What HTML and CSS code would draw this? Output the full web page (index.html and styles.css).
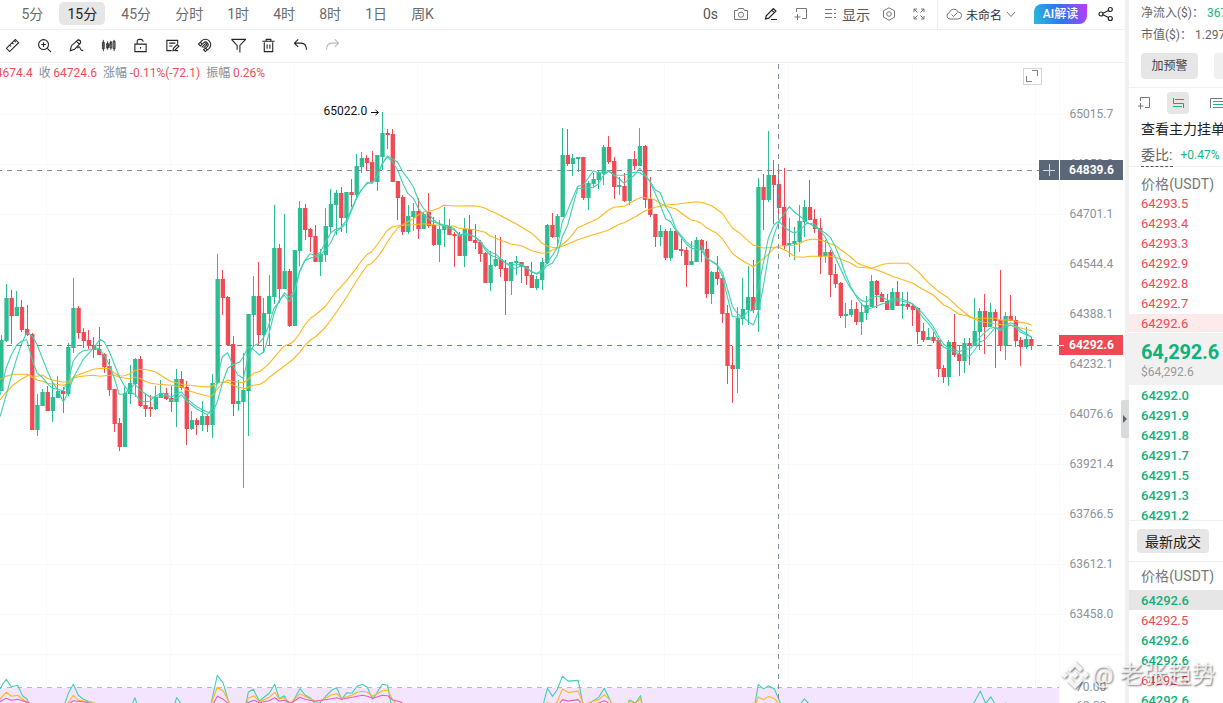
FILE: index.html
```html
<!DOCTYPE html>
<html lang="zh-CN">
<head>
<meta charset="utf-8">
<title>K线行情</title>
<link rel="stylesheet" href="styles.css">
</head>
<body>
<div class="app">
  <main class="main">
    <header class="topbar">
      <nav class="periods">
        <span>5分</span><span class="on">15分</span><span>45分</span><span>分时</span><span>1时</span><span>4时</span><span>8时</span><span>1日</span><span>周K</span>
      </nav>
      <div class="tools">
        <span class="secs">0s</span>
        <svg class="camera" width="16" height="14" viewBox="0 0 16 14"><path d="M1.500 3.500h3l1-2h5l1 2h3v9h-13z"/><circle cx="8" cy="7.700" r="2.600"/></svg>
        <svg class="pencil dark" width="14" height="14" viewBox="0 0 14 14"><path d="M1.500 12l.8-3.200 7-7.200 2.600 2.500-7.200 7.100zM7.800 3.200l2.500 2.500M7 12.500h6"/></svg>
        <svg class="addbox" width="14" height="14" viewBox="0 0 14 14"><path d="M2.500 5V1.500h10v10H8M3.500 7v6M.5 10h6"/></svg>
        <svg class="list" width="12" height="12" viewBox="0 0 12 12"><path d="M0 1.500h7M0 5.500h7M0 9.500h7M9 1.500h2M9 5.500h2M9 9.500h2"/></svg>
        <span class="show">显示</span>
        <svg class="hex" width="14" height="14" viewBox="0 0 14 14"><path d="M7 .8l5.500 3v6.400L7 13.200l-5.500-3V3.800z"/><circle cx="7" cy="7" r="2.300"/></svg>
        <svg class="full" width="12" height="12" viewBox="0 0 12 12"><path d="M1 4V1h3M1 1l3.500 3.500M8 1h3v3M11 1L7.500 4.500M1 8v3h3M1 11l3.500-3.500M8 11h3V8M11 11L7.500 7.500"/></svg>
        <div class="layout">
          <svg width="16" height="12" viewBox="0 0 16 12"><path d="M4 11a3.200 3.200 0 0 1-.6-6.300A4.700 4.700 0 0 1 12.300 4a3.500 3.500 0 0 1-.5 7zM5.500 6.500l2 2L11.500 4.500"/></svg>
          <span>未命名</span>
          <svg class="chev" width="10" height="7" viewBox="0 0 10 7"><path d="M1 1l4 4.500L9 1"/></svg>
        </div>
        <span class="ai">AI解读</span>
        <svg class="share dark" width="16" height="16" viewBox="0 0 16 16"><circle cx="3" cy="8" r="2"/><circle cx="12.300" cy="3.500" r="2"/><circle cx="12.300" cy="12.500" r="2"/><path d="M5 7.200l5.500-2.700M5 8.800l5.500 2.700"/></svg>
      </div>
    </header>
    <div class="drawbar">
      <i><svg viewBox="0 0 16 16"><path d="M1.500 11L11 1.500 14.500 5 5 14.500zM5 7.500l1.500 1.500M7.500 5l1.500 1.500M10 2.800l1.500 1.500"/></svg></i>
      <i><svg viewBox="0 0 16 16"><circle cx="7" cy="7" r="5.300"/><path d="M11 11l4 4M4.500 7h5M7 4.500v5"/></svg></i>
      <i><svg viewBox="0 0 16 16"><path d="M1.500 13.500l1-5L9.500 2q3 0 3 3L6 12zM1.500 13.500L6 12M8 3.500l3 3M9 11q2-3 3 0t3 2"/></svg></i>
      <i class="kline"><svg viewBox="0 0 16 16"><path d="M1.500 4.500h2v7h-2zM2.500 2v12M6 6h2v4.500H6zM7 3.500v9M9.500 4.500h2v6h-2zM10.500 3v9.500M13 3.500h2v8h-2zM14 2v12M6 11l5-6"/></svg></i>
      <i><svg viewBox="0 0 16 16"><path d="M2 6.500h12v8H2zM4.500 6.500V3q.5-1.500 2-1.500h2q2 0 2.500 2.500M8 9.500v2"/></svg></i>
      <i><svg viewBox="0 0 16 16"><path d="M7 13.500H2v-11h11.500V6M4.500 5.500h6.500M4.500 8.500H8M8.500 13.500l.5-2.500 4-4 1.800 1.800-4 4zM11 13.500h3"/></svg></i>
      <i><svg viewBox="0 0 16 16"><path d="M1.500 6.500L5 3a5.500 5.500 0 0 1 8 8l-4 3.500-2-2L11 9.200a2.800 2.800 0 0 0-4-4L3.500 8.500zM7 10.500l3-3a.8.8 0 0 0-1.200-1.200L5 10M3.500 4.500l2 2M9 10.800l2 2"/></svg></i>
      <i class="funnel"><svg viewBox="0 0 16 16"><path d="M.5 1.500h15L9.500 8v7.500M.5 1.500L6.500 8v4.500"/></svg></i>
      <i><svg viewBox="0 0 16 16"><path d="M3.500 4.500v10h9v-10M1.500 3.500h13M5.500 3.500v-2h5v2M6.500 7v4.500M9.500 7v4.500"/></svg></i>
      <i><svg viewBox="0 0 16 16"><path d="M5.500 1.500L1.500 5.500l4 4M1.500 5.500H9q5 0 5.500 7"/></svg></i>
      <i class="off"><svg viewBox="0 0 16 16"><path d="M10.500 1.500l4 4-4 4M14.500 5.500H7q-5 0-5.500 7"/></svg></i>
    </div>
    <section class="chart">
      <svg id="plot" class="plot" width="1125" height="640" viewBox="0 63 1125 640"></svg>
      <div class="ohlc"><b>64674.4</b><span>收</span><b>64724.6</b><span>涨幅</span><b>-0.11%(-72.1)</b><span>振幅</span><b>0.26%</b></div>
      <div class="high">65022.0</div>
      <div class="axis"><span>65015.7</span><span>64858.2</span><span>64701.1</span><span>64544.4</span><span>64388.1</span><span>64232.1</span><span>64076.6</span><span>63921.4</span><span>63766.5</span><span>63612.1</span><span>63458.0</span></div>
      <div class="axis sub"><span>70.00</span><span>60.00</span></div>
      <div class="expand"></div>
      <div class="plus"></div>
      <div class="tag cross">64839.6</div>
      <div class="tag last">64292.6</div>
    </section>
  </main>
  <div class="gutter"><div class="handle"></div></div>
  <aside class="side">
    <div class="stats">
      <p>净流入($)：<em>367</em></p>
      <p>市值($)：<s>1.297</s></p>
      <div class="btns"><span>加预警</span><span></span></div>
    </div>
    <div class="modes">
      <svg width="14" height="14" viewBox="0 0 14 14"><path d="M2.500 5V1.500h9v10H7M2.500 7v6M0 10h5.500"/></svg>
      <span><svg width="14" height="12" viewBox="0 0 14 12"><path d="M2.500 1v5.500h10V11"/><path class="r" d="M4 2.500h9"/><path class="g" d="M2 9.500h9"/></svg></span>
      <svg class="depth" width="14" height="12" viewBox="0 0 14 12"><path d="M13 1.500H1.500V11"/><path class="g" d="M4 4.500h10M4 7.500h10M4 10.500h10"/></svg>
    </div>
    <div class="whale">查看主力挂单</div>
    <div class="ratio"><span>委比:</span><em>+0.47%</em></div>
    <div class="head">价格(USDT)</div>
    <div class="rows asks"><p>64293.5</p><p>64293.4</p><p>64293.3</p><p>64292.9</p><p>64292.8</p><p>64292.7</p><p class="best">64292.6</p></div>
    <div class="mid"><strong>64,292.6</strong><small>$64,292.6</small></div>
    <div class="rows bids"><p>64292.0</p><p>64291.9</p><p>64291.8</p><p>64291.7</p><p>64291.5</p><p>64291.3</p><p>64291.2</p></div>
    <div class="tabs"><span>最新成交</span></div>
    <div class="head trade">价格(USDT)</div>
    <div class="rows trades"><p class="now">64292.6</p><p class="dn">64292.5</p><p>64292.6</p><p>64292.6</p><p class="dn">64292.5</p><p>64292.6</p></div>
  </aside>
  <div class="mark"><svg width="28" height="28" viewBox="0 0 28 28"><path d="M14 0l8 8-3 3-5-5-5 5-3-3zM0 14l3.500-3.500L7 14l-3.500 3.500zM10.500 14l3.500-3.500 3.500 3.500-3.500 3.500zM21 14l3.500-3.500L28 14l-3.500 3.500zM14 28l8-8-3-3-5 5-5-5-3 3z"/></svg><span>@ 老张趋势</span></div>
</div>
<script src="chart.js"></script>
</body>
</html>
```
FILE: styles.css
```css
* { box-sizing: border-box; }
body { margin: 0; background: #fff; font-family: Roboto, "Noto Sans CJK SC", sans-serif; font-size: 12px; color: #666; }
p { margin: 0; }
em, i { font-style: normal; }
s { text-decoration: none; }
svg { fill: none; stroke: #777; stroke-width: 1; flex: none; }
.dark { stroke: #222; stroke-width: 1.2; }
.app { position: relative; display: flex; width: 1223px; height: 703px; overflow: hidden; }
.main { width: 1125px; flex: none; display: flex; flex-direction: column; }

.topbar { height: 30px; border-bottom: 1px solid #f0f0f0; display: flex; justify-content: space-between; }
.periods { display: flex; gap: 8.1px; padding: 2px 0 0 13.5px; font-size: 14px; line-height: 24px; color: #6b6b6b; }
.periods span { padding: 0 8px; height: 23px; border-radius: 5px; white-space: nowrap; }
.periods .on { background: #e6e6e6; color: #222; }
.tools { display: flex; align-items: center; height: 28px; padding-right: 11px; color: #555; font-size: 14px; }
.secs { margin-right: 16px; }
.camera { margin-left: -1px; }
.pencil { margin-left: 15px; }
.addbox { margin-left: 16px; margin-right: -1px; }
.list { margin: 0 5px 0 18px; }
.hex { margin: 0 17px 0 12px; }
.layout { display: flex; align-items: center; height: 29px; margin: 1px 0 0 12px; padding: 0 18px 1px 8px; border-left: 1px solid #eee; font-size: 12px; color: #333; }
.layout span { margin: 0 4px; }
.ai { width: 53px; height: 20px; border-radius: 8px 0 8px 0; background: linear-gradient(70deg, #28bcd8, #2f73f5 50%, #c637fb); color: #fff; font-size: 12px; font-weight: 500; line-height: 20px; text-align: center; }
.share { margin-left: 11px; }

.drawbar { height: 33px; border-bottom: 1px solid #f0f0f0; display: flex; }
.drawbar i { width: 32px; display: flex; align-items: center; justify-content: center; flex: none; padding-bottom: 1px; }
.drawbar i:first-child { width: 29px; padding-right: 4px; }
.drawbar i:not(:first-child) { padding-right: 1px; }
.drawbar .funnel { padding-left: 4px; }
.drawbar svg { width: 15px; height: 15px; stroke: #222; stroke-width: 1.15; }
.drawbar .kline svg { stroke-width: .9; }
.drawbar .off svg { stroke: #bbb; }

.chart { position: relative; height: 640px; overflow: hidden; }
.plot { display: block; stroke: none; }
.ohlc { position: absolute; top: 2px; left: -11px; display: flex; line-height: 16px; color: #848e9c; white-space: nowrap; }
.ohlc b { font-weight: 400; color: #ef4d58; margin-right: 6px; }
.ohlc span { margin-right: 2.7px; }
.high { position: absolute; left: 323.5px; top: 40px; line-height: 16px; color: #111; }
.axis { position: absolute; left: 1069.5px; top: 26px; display: grid; grid-auto-rows: 50px; line-height: 50px; color: #8a939c; }
.axis.sub { top: 614px; grid-auto-rows: 19px; line-height: 20px; left: 1076px; }
.tag { position: absolute; left: 1059px; width: 64px; height: 20px; padding-left: 10px; line-height: 20px; color: #fff; font-weight: 700; }
.cross { top: 97px; background: #5b6778; border-left: 1px solid #fff; padding-left: 9px; }
.last { top: 272px; background: #ef4954; }
.last::before { content: ""; position: absolute; left: 0; top: 10px; width: 5px; height: 1px; background: #fff; }
.plus { position: absolute; left: 1039px; top: 97px; width: 20px; height: 20px; background: linear-gradient(#d5dae0, #d5dae0) 4px 10px / 12px 1px no-repeat, linear-gradient(#d5dae0, #d5dae0) 10px 4px / 1px 12px no-repeat, #5b6778; }
.expand { position: absolute; left: 1023px; top: 5px; width: 19px; height: 17px; border: 1px solid #d5d5d5; }
.expand::before, .expand::after { content: ""; position: absolute; width: 5px; height: 5px; }
.expand::before { right: 3px; top: 1px; border-top: 1px solid #7c8594; border-right: 1px solid #7c8594; }
.expand::after { left: 2px; bottom: 2px; border-bottom: 1px solid #7c8594; border-left: 1px solid #7c8594; }

.gutter { position: relative; width: 4px; background: #f0f0f0; flex: none; }
.handle { position: absolute; left: -4px; top: 400px; width: 8px; height: 38px; background: #d9dadc; border-radius: 2px 0 0 2px; }
.handle::after { content: ""; position: absolute; left: 2px; top: 15px; border: 4px solid transparent; border-left-color: #666; border-right: 0; }

.side { width: 94px; overflow: hidden; display: flex; flex-direction: column; flex: none; white-space: nowrap; }
.side > * { flex: none; }
.stats { height: 88px; padding: 2px 0 0 12px; border-bottom: 1px solid #f0f0f0; }
.stats p { height: 22px; line-height: 22px; }
.stats em, .ratio em { color: #18b77c; }
.stats em, .stats s { margin-left: 3px; }
.btns { display: flex; gap: 16px; margin-top: 7px; }
.btns span { width: 57px; height: 26px; border-radius: 4px; background: #e6e6e6; color: #444; text-align: center; line-height: 27px; flex: none; }
.btns span + span { background: #f0f0f0; }
.modes { display: flex; align-items: center; padding: 4px 0 0 9px; height: 26px; }
.modes span { width: 22px; height: 22px; margin: 0 20px 0 15px; border-radius: 4px; background: #e6e6e6; display: flex; align-items: center; justify-content: center; flex: none; }
.modes .r { stroke: #ef4954; }
.modes .g { stroke: #18b77c; }
.whale { height: 28px; line-height: 30px; padding-left: 12px; font-size: 14px; color: #222; }
.ratio { height: 25px; padding-left: 12px; line-height: 26px; border-bottom: 1px solid #f0f0f0; }
.ratio span { display: inline-block; height: 25px; width: 32px; margin-right: 7.5px; font-size: 14px; border-bottom: 1px dashed #555; vertical-align: top; }
.head { height: 26px; padding-left: 12px; font-size: 14px; line-height: 35px; color: #777; letter-spacing: .1px; }
.rows p { height: 20px; padding-left: 12px; font-size: 13px; line-height: 22px; color: #0fb27a; font-weight: 500; }
.asks { height: 140px; }
.asks p, .rows .dn { color: #ef4954; font-weight: 400; }
.asks .best { background: linear-gradient(#fdebec, #fdebec) 0 1px / 100% 18px no-repeat; }
.mid { height: 52px; padding-left: 12px; background: #f1f1f1; display: flex; flex-direction: column; }
.mid strong { height: 32px; line-height: 38px; font-size: 20px; font-weight: 700; color: #0fb27a; letter-spacing: -.2px; }
.mid small { font-size: 12px; line-height: 14px; color: #999; }
.bids { height: 135px; overflow: hidden; }
.tabs { height: 42px; border: solid #eee; border-width: 1px 0; padding: 8px; }
.tabs span { display: block; width: 72px; height: 24px; border-radius: 4px; background: #e6e6e6; font-size: 14px; line-height: 27px; text-align: center; color: #222; }
.trade { height: 28px; line-height: 29px; }
.rows .now { background: #e6e6e6; }

.mark { position: absolute; left: 1061px; top: 660px; display: flex; align-items: center; gap: 3px; font-size: 24px; line-height: 30px; color: rgba(255, 255, 255, .8); text-shadow: 1px 1px 2px rgba(0, 0, 0, .55); white-space: nowrap; }
.mark svg { fill: rgba(255, 255, 255, .9); stroke: none; filter: drop-shadow(1px 1px 1px rgba(0, 0, 0, .6)); }
```
FILE: chart.js
```js
const plot = document.getElementById('plot');
const NS = 'http://www.w3.org/2000/svg';
function add(tag, attrs) {
  const e = document.createElementNS(NS, tag);
  for (const k in attrs) e.setAttribute(k, attrs[k]);
  plot.appendChild(e);
  return e;
}
const UP = '#2dbd92', DOWN = '#f04b55';

// grid
[46, 170, 294, 417, 541, 664, 788, 912, 1035, 1059].forEach(x => add('rect', { x, y: 64, width: 1, height: 639, fill: '#f9f9f9' }));
for (let y = 114; y <= 614; y += 50) add('rect', { x: 0, y, width: 1065, height: 1, fill: '#f9f9f9' });
add('rect', { x: 0, y: 654, width: 1123, height: 1, fill: '#f7f7f7' });
add('rect', { x: 0, y: 688, width: 1059, height: 15, fill: '#f3e5fd' });

// direction, high, body top, body bottom, low
const candles = `g335 340 391 391,g284 298 341 342,r290 298 316 344,g291 307 316 316,r300 307 330 332,r305 329 335 336,r333 334 430 430,g394 405 430 436,g389 392 406 406,r386 392 411 411,
g382 397 411 422,g376 391 398 398,r387 391 394 413,g343 347 394 396,g278 308 348 353,r306 308 333 339,r328 332 341 348,r330 340 346 349,r337 345 350 358,r327 349 355 355,
r353 354 367 373,r359 366 390 396,r389 389 424 432,r418 423 447 451,g387 393 447 447,g365 383 394 404,g358 359 384 397,r356 359 406 407,r394 405 409 417,r395 407 409 417,
g386 397 409 410,g380 393 398 398,r388 393 399 400,r386 398 402 412,g369 379 402 427,r371 379 388 390,r381 387 429 445,g411 420 429 430,r418 420 425 435,g401 416 425 431,
r414 416 425 432,g374 383 425 438,g254 279 383 384,r270 279 298 315,r296 297 345 346,r336 344 404 416,g380 401 404 411,g353 390 402 488,g314 314 391 436,g276 296 315 347,
r262 296 335 345,g298 313 335 353,g275 296 314 346,g205 248 297 304,r244 248 289 303,g214 271 289 289,r269 271 326 327,g250 250 326 326,g201 208 251 266,r204 208 230 240,
r228 229 237 252,r225 236 262 262,g249 254 262 276,g208 226 255 262,g189 204 227 234,g190 193 205 235,r187 193 218 232,g192 192 218 233,r179 192 195 207,g154 166 195 199,
g152 158 167 173,r155 158 163 171,r151 162 182 183,g155 155 182 191,g112 133 157 170,r129 133 135 149,r129 134 182 182,r181 181 198 220,r195 197 232 235,g205 216 232 234,
g203 211 217 231,r198 211 229 239,g212 214 229 229,r193 212 226 228,r217 225 245 246,g220 229 245 262,g207 226 230 247,r219 226 235 235,r232 234 236 267,r232 235 256 256,
g218 229 256 267,r215 229 241 241,r224 240 243 249,r240 242 254 262,r252 253 283 283,g251 265 283 291,g235 259 266 267,r237 259 269 277,r260 268 281 315,g262 262 281 295,
g256 261 263 275,r262 262 267 283,r266 266 276 285,r262 275 288 288,g276 279 288 290,g258 262 280 290,g224 225 263 264,r213 225 237 238,g214 216 237 247,g128 155 217 217,
r129 155 164 166,g154 158 164 176,g157 157 159 172,r157 157 198 200,g181 183 198 210,g173 179 184 188,g170 173 180 189,g145 147 174 185,r136 147 162 164,r157 161 187 199,
g177 185 187 195,r173 186 201 202,g159 159 201 205,r151 159 166 170,g128 146 166 166,r145 146 200 208,r177 199 215 217,r214 214 237 247,g225 231 237 246,r229 231 258 260,
g228 231 258 261,r231 231 250 250,r239 249 251 256,r247 250 265 287,g241 261 265 265,g237 240 262 262,r239 240 250 262,r241 249 294 298,g271 272 294 304,r256 272 279 285,
r275 278 314 323,r305 313 366 384,r346 365 369 403,g307 318 369 393,g278 309 319 325,g266 297 310 325,r260 297 310 313,g178 187 310 332,r174 187 200 230,g131 175 200 202,
r160 175 185 224,r169 184 208 220,r168 207 246 249,g218 243 245 257,g227 241 244 260,g205 221 242 252,g200 207 222 237,r180 207 220 220,r209 219 229 233,r218 228 257 274,
g240 252 256 263,r250 252 275 297,r264 274 284 288,r282 283 316 318,g303 314 316 328,g300 309 315 317,r302 309 322 325,g303 312 322 335,g296 305 313 320,g275 281 307 307,
r280 281 295 308,r292 294 302 302,r294 301 310 310,g288 292 310 310,r281 292 306 306,g292 304 306 319,r292 304 307 310,r305 306 310 326,r307 308 332 344,r323 331 340 342,
g328 337 340 340,r332 337 341 343,r338 340 369 377,r365 368 377 383,g340 342 377 386,r314 342 355 357,r346 354 361 376,g338 343 361 373,r338 343 346 365,g298 331 346 346,
g308 311 332 350,r294 311 327 354,g303 312 327 327,r309 312 321 368,r270 320 346 351,g312 316 346 360,r295 316 321 321,r316 320 341 347,r337 340 347 366,g327 339 347 349,
r337 339 346 350`.split(',');
candles.forEach((c, i) => {
  c = c.trim();
  const fill = c[0] === 'g' ? UP : DOWN;
  const [hi, top, bottom, lo] = c.slice(1).split(' ').map(Number);
  const x = 6.4 + 5.15 * (i - 1);
  add('rect', { x: Math.floor(x), y: hi, width: 1, height: lo - hi, fill });
  add('rect', { x: (x - 2.05).toFixed(2), y: top, width: 4.35, height: Math.max(1, bottom - top), fill });
});

// Each part is [origin x, origin y, units per pixel, points]; parts join left to right.
function trace(stroke, parts, width = 1.1) {
  const out = [];
  let last = -10;
  parts.forEach(([ox, oy, k, s]) => s.split(' ').forEach(p => {
    const [a, b] = p.split(',').map(Number);
    const x = ox + a / k, y = oy + b / k;
    if (x > last) { out.push(x.toFixed(1) + ',' + y.toFixed(1)); last = x; }
  }));
  add('polyline', { points: out.join(' '), fill: 'none', stroke, 'stroke-width': width, 'stroke-linejoin': 'round' });
}
const GOLD = '#ffb71b', TEAL = '#3ed1b2', PINK = '#ee5bbd';
trace(GOLD, [
  [0, 240, 3, '0,480 20,455 40,435 60,420 85,406 96,412 112,420 127,424 142,430 190,436 205,430 220,415 235,410 260,407 280,406 300,409 328,406 343,406 358,412 388,416 404,412 420,415 436,424 451,430 475,433 514,436 530,438 545,440 560,450 590,460 625,469 637,467 652,447 667,430 683,420 698,424 730,428 745,418 760,400 780,394 795,382 810,367'],
  [240, 100, 3, '133,737 148,733 163,722 179,700 194,675 211,655 226,645 257,618 287,577 318,544 349,505 364,483 382,463 394,456 411,435 427,412 442,391 457,381 475,377 520,374 550,371 580,374 611,377 640,378 655,384 705,389 735,397 751,408 780,420 810,431'],
  [470, 110, 3, '122,402 154,407 185,422 215,430 231,428 262,413 280,408 323,389 355,379 385,370 416,360 447,343 463,338 500,318 524,303 556,292 587,285 618,283 640,280 679,275 694,277 725,287 757,310 787,354 810,370'],
  [690, 120, 3, '160,349 190,376 205,379 220,384 265,381 290,393 315,410 340,412 359,409 420,409 440,413 482,429 500,441 545,445 580,433 600,430'],
  [850, 250, 3, '125,40 175,40 203,64 235,98 265,124 296,145 328,175 359,200 374,208 389,214 404,217 436,221 467,226 480,225 497,230 545,242']
]);
trace(GOLD, [
  [0, 240, 3, '0,418 20,408 40,403 80,403 96,408 112,409 127,405 142,415 157,420 190,427 205,424 220,412 235,404 260,395 280,388 305,385 328,386 343,399 358,408 373,407 388,402 404,392 420,388 440,389 466,395 490,410 514,425 530,428 550,434 590,438 625,441 637,438 652,430 667,427 683,427 698,435 713,441 735,446 745,442 760,436 780,433 795,424 810,410'],
  [240, 100, 3, '157,780 179,757 194,737 211,720 226,711 257,681 287,640 318,594 349,544 364,521 382,496 394,491 411,473 427,452 442,426 457,404 473,384 488,374 520,356 535,345 550,336 580,331 596,325 611,316 650,318 700,317 721,320 736,325 751,333 767,339 810,362'],
  [470, 110, 3, '138,341 169,360 185,370 200,383 215,399 231,408 247,412 265,413 277,404 293,390 307,374 323,353 340,346 370,332 385,325 400,313 416,300 431,292 463,289 480,279 500,268 515,262 540,265 556,270 571,280 587,289 618,297 649,320 664,330 679,333 694,340 709,353 740,370 757,386 787,430 810,448'],
  [690, 120, 3, '160,423 190,441 205,428 235,403 250,386 265,378 313,376 330,370 350,360 370,357 400,362 420,371 436,376 452,389 482,411 500,428 514,434 545,445 575,455 600,466'],
  [850, 250, 3, '125,79 150,86 188,100 218,118 250,135 281,165 296,172 328,193 355,199 374,205 436,205 455,211 480,209 497,214 530,220 545,226']
]);
trace(TEAL, [
  [0, 240, 3, '0,465 18,385 34,345 50,315 65,303 80,299 90,335 100,370 112,400 127,412 142,430 157,445 190,452 205,420 220,363 235,342 250,332 280,328 295,325 313,345 328,375 343,415 358,463 373,462 388,450 404,432 420,450 451,472 480,470 500,466 514,482 545,465 560,483 590,507 622,524 637,505 652,420 667,350 683,338 698,375 713,405 730,415 745,350 760,318 778,310 792,290'],
  [240, 100, 3, '85,680 102,625 118,605 133,578 148,592 164,570 179,515 194,482 211,461 226,467 241,457 257,425 272,398 287,388 302,383 319,362 349,295 364,270 382,247 397,247 411,230 427,192 442,171 457,185 473,210 488,250 503,280 520,295 535,325 550,345 581,367 596,370 628,384 643,390 658,404 689,404 704,410 721,426 736,450 751,465 767,472 782,478 797,490 810,498'],
  [470, 110, 3, '122,462 138,465 154,463 169,472 185,485 200,490 215,482 231,458 247,437 262,412 277,335 293,300 323,229 340,225 370,182 385,188 416,182 448,207 463,220 478,207 494,195 509,174 524,193 540,215 571,285 587,327 602,335 618,362 649,402 664,415 694,420 709,444 740,464 757,498 772,560 787,618 803,622'],
  [690, 120, 3, '160,590 175,573 190,571 205,505 220,430 235,355 252,315 266,303 281,320 298,332 313,340 328,332 350,310 374,312 389,330 405,350 421,382 436,412 452,447 467,480 482,505 500,528 514,541 529,547 545,533 560,528 575,531 600,543'],
  [850, 250, 3, '125,146 155,147 175,155 188,162 203,175 218,190 235,210 250,230 265,258 281,283 296,294 311,298 328,305 343,298 359,296 374,282 389,262 404,248 419,235 436,232 451,242 467,232 482,225 497,233 512,247 545,262']
]);
trace(TEAL, [
  [0, 240, 3, '0,530 20,460 35,405 50,355 65,310 80,278 90,282 100,293 112,315 127,355 142,392 157,425 172,448 190,486 205,455 220,413 250,358 280,325 300,298 313,306 328,335 343,372 358,410 373,437 388,455 404,463 420,480 436,486 450,483 466,467 490,460 514,472 530,460 545,456 560,475 590,500 622,516 637,520 652,485 667,430 683,385 698,375 720,365 730,350 745,320 760,328 778,345 792,335'],
  [240, 100, 3, '85,710 102,640 118,600 133,585 148,605 164,575 179,512 194,482 211,474 226,472 241,464 257,450 272,428 287,395 302,385 319,370 349,297 364,270 382,250 397,250 411,228 427,190 442,168 457,176 473,187 488,215 503,235 520,260 535,300 550,325 565,340 581,360 596,372 628,378 643,386 658,408 673,400 704,410 721,423 736,444 751,457 767,462 782,476 797,488 810,494'],
  [470, 110, 3, '122,473 138,475 154,468 169,474 185,485 200,493 215,486 231,467 247,460 262,435 277,380 293,345 323,235 340,235 370,232 385,223 401,195 416,184 431,195 463,196 494,187 509,188 524,197 540,213 556,240 571,248 587,290 602,315 618,358 649,395 664,408 694,408 709,444 740,462 757,485 772,535 787,588 803,612'],
  [690, 120, 3, '160,592 175,605 190,615 205,575 220,500 235,410 252,345 266,305 281,283 298,260 313,276 328,287 350,306 374,320 389,330 405,338 421,352 436,380 452,420 467,465 482,500 500,532 514,552 529,566 545,564 560,558 575,552 600,546'],
  [850, 250, 3, '125,153 155,153 188,162 203,180 218,202 235,220 250,240 265,270 281,292 296,298 311,305 343,317 359,318 374,300 389,277 404,270 419,252 436,232 451,238 467,225 482,218 497,225 512,240 545,262']
]);

// RSI pane
const dash = (x1, y1, x2, y2, stroke) => add('line', { x1, y1, x2, y2, stroke, 'stroke-dasharray': '5 5', 'shape-rendering': 'crispEdges' });
dash(-3, 687.5, 1059, 687.5, '#bdb8c4');
const A = [0, 650, 3], B = [500, 650, 2.8];
trace(TEAL, [[...A, '0,117 8,102 19,88 34,110 53,106 68,138 82,148 90,175 190,175 205,130 220,103 235,136 250,148 270,155 300,170 390,175 405,143 415,175 520,175 530,143 550,170 630,175 652,76 670,100 690,170 735,175 745,127 760,118 778,153 808,130 824,103 838,146 853,137 870,170 900,116 915,135 930,143 945,160 960,158 978,138 995,121 1010,113 1025,148 1040,128 1056,130 1071,109 1087,103 1102,112 1118,148 1147,103 1163,106 1175,175'], [...B, '115,175 133,107 147,130 160,112 175,73 191,87 219,85 234,160 262,141 277,132 292,107 320,165 350,170 362,140 380,148 393,128 402,170 710,175 723,97 738,109 752,100 768,109 792,165 830,165 852,137 880,165 1035,170 1040,154 1050,170 1315,170 1345,115 1360,150 1374,131 1392,160 1405,170 1415,148 1432,157 1445,175']]);
trace(GOLD, [[...A, '0,147 19,127 34,139 53,136 68,148 90,163 200,165 220,136 235,151 280,157 300,170 630,170 652,112 670,124 690,162 738,165 745,144 762,137 778,156 808,142 824,127 838,147 853,143 872,160 900,131 915,139 945,153 965,151 995,134 1010,131 1025,145 1056,136 1071,127 1087,124 1102,127 1118,139 1147,122 1163,121 1178,150 1200,175'], [...B, '120,175 133,146 147,157 160,145 175,109 191,119 219,115 234,153 262,143 277,139 292,125 306,138 320,160 355,160 362,143 380,150 393,136 402,165 712,165 723,132 738,139 752,130 768,136 792,160 830,162 852,151 875,160 900,175 1335,175 1345,157 1360,175 1374,156 1392,175']]);
trace(PINK, [[...A, '0,155 19,145 34,151 53,148 90,160 200,165 220,152 260,157 300,170 635,170 652,139 670,148 690,165 738,160 762,151 778,158 808,152 824,143 838,154 853,151 872,160 900,142 915,148 945,154 995,146 1010,143 1025,148 1056,142 1087,136 1102,139 1118,145 1147,136 1163,137 1178,150 1203,156 1220,170'], [...B, '120,175 160,157 175,139 191,143 219,139 234,158 277,148 292,142 320,157 355,160 362,151 380,155 393,150 402,165 712,160 723,153 738,158 752,151 768,154 790,165 1100,175']]);

// last price, crosshair and high marker
dash(-3, 345.5, 1059, 345.5, '#ef4954');
dash(-3, 170.5, 1039, 170.5, '#7f8b9b');
dash(778.5, 64, 778.5, 703, '#7f8b9b');
add('path', { d: 'M371 112.500h7M375.500 110l3 2.500-3 2.500', fill: 'none', stroke: '#111' });
```
